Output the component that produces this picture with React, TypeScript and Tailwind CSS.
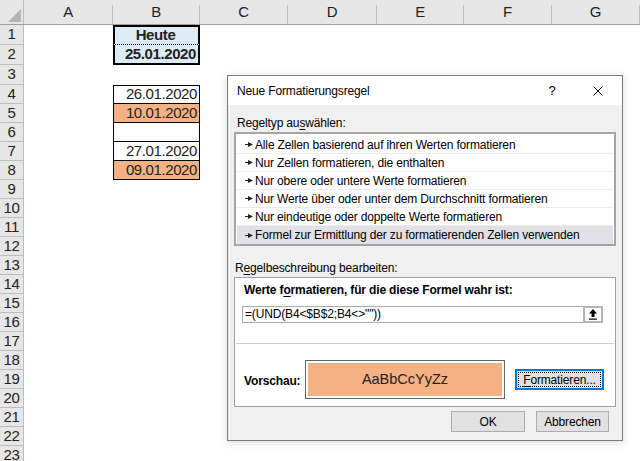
const COLS = [
  { name: "A", w: "w-[89px]" },
  { name: "B", w: "w-[87px]" },
  { name: "C", w: "w-[88px]" },
  { name: "D", w: "w-[89px]" },
  { name: "E", w: "w-[87px]" },
  { name: "F", w: "w-[88px]" },
  { name: "G", w: "w-[88px]" },
];

type Cell = { text?: string; cls: string; textCls?: string };

// Inhalt der Spalte B; alle anderen Zellen sind leer
const B_CELLS: Record<number, Cell> = {
  1: {
    text: "Heute",
    cls: "bg-[#ddebf7] border-l-2 border-r-2 border-t-2 border-b border-black [border-bottom-style:dotted] justify-center",
    textCls: "font-bold",
  },
  2: {
    text: "25.01.2020",
    cls: "bg-[#ddebf7] border-l-2 border-r-2 border-b-2 border-black justify-end",
    textCls: "font-bold",
  },
  4: { text: "26.01.2020", cls: "border border-black justify-end" },
  5: { text: "10.01.2020", cls: "bg-[#f4b183] border-x border-b border-black justify-end" },
  6: { cls: "border-x border-b border-black" },
  7: { text: "27.01.2020", cls: "border-x border-b border-black justify-end" },
  8: { text: "09.01.2020", cls: "bg-[#f4b183] border-x border-b border-black justify-end" },
};

const RULE_TYPES = [
  "Alle Zellen basierend auf ihren Werten formatieren",
  "Nur Zellen formatieren, die enthalten",
  "Nur obere oder untere Werte formatieren",
  "Nur Werte über oder unter dem Durchschnitt formatieren",
  "Nur eindeutige oder doppelte Werte formatieren",
  "Formel zur Ermittlung der zu formatierenden Zellen verwenden",
];

function ListArrow() {
  return (
    <svg width="8" height="5" viewBox="0 0 8 5" className="shrink-0">
      <rect x="0" y="2" width="4" height="1" fill="#222" />
      <path d="M3 0 L8 2.5 L3 5 Z" fill="#222" />
    </svg>
  );
}

function Sheet() {
  const rows = Array.from({ length: 23 }, (_, i) => i + 1);
  return (
    <div className="flex flex-col font-['Liberation_Sans',Arial,sans-serif] text-[15px] tracking-[-0.4px] text-[#222]">
      <div className="flex h-[25px] bg-[#e6e6e6] border-b border-[#a0a0a0]">
        <div className="w-[24px] shrink-0 flex items-end justify-end border-r border-[#bdbdbd] pr-[2px] pb-[2px]">
          <svg width="13" height="13" viewBox="0 0 13 13">
            <path d="M13 0 L13 13 L0 13 Z" fill="#b4b4b4" />
          </svg>
        </div>
        {COLS.map((c) => (
          <div key={c.name} className={`${c.w} shrink-0 flex items-end`}>
            <span className="flex-1 h-full flex items-center justify-center">{c.name}</span>
            <span className="w-px h-[19px] bg-[#bdbdbd]" />
          </div>
        ))}
      </div>
      {rows.map((r) => {
        const b = B_CELLS[r];
        return (
          <div key={r} className={`flex ${r <= 3 ? "h-[20px]" : "h-[19px]"}`}>
            <div className="w-[24px] shrink-0 bg-[#e6e6e6] border-r border-b border-[#bdbdbd] flex items-center justify-center">
              {r}
            </div>
            <div className="w-[89px] shrink-0" />
            <div className={`w-[87px] shrink-0 flex items-center pr-[2px] ${b ? b.cls : ""}`}>
              {b?.text && <span className={b.textCls}>{b.text}</span>}
            </div>
          </div>
        );
      })}
    </div>
  );
}

function Dialog() {
  return (
    <div className="absolute left-[227px] top-[75px] w-[396px] h-[366px] border border-[#7a7a7a] bg-[#f0f0f0] flex flex-col font-['Liberation_Sans',Arial,sans-serif] text-[12px] tracking-[-0.15px] text-black shadow-[0_2px_8px_rgba(0,0,0,0.15)]">
      <div className="h-[29px] bg-white flex items-center pl-[9px]">
        <span className="flex-1">Neue Formatierungsregel</span>
        <span className="w-[10px] text-center text-[13px] mr-[36px]">?</span>
        <svg width="10" height="10" viewBox="0 0 10 10" className="mr-[19px]">
          <path d="M0.5 0.5 L9.5 9.5 M9.5 0.5 L0.5 9.5" stroke="#000" strokeWidth="1" />
        </svg>
      </div>

      <div className="flex flex-col px-[6px] pt-[10px]">
        <div className="h-[16px] leading-[16px] pl-[3px]">
          Regeltyp au<span className="underline underline-offset-2">s</span>wählen:
        </div>
        <div className="mt-[1px] border-2 border-[#a5a5a5] bg-white px-px pt-[2px]">
          {RULE_TYPES.map((t, i) => (
            <div
              key={t}
              className={`h-[18px] flex items-center gap-[2px] pl-[8px] ${
                i === RULE_TYPES.length - 1 ? "bg-[#e0e0e6]" : "border-b border-[#ececec]"
              }`}
            >
              <ListArrow />
              <span>{t}</span>
            </div>
          ))}
        </div>

        <div className="mt-[14px] h-[16px] leading-[16px] pl-px">
          R<span className="underline underline-offset-2">e</span>gelbeschreibung bearbeiten:
        </div>
        <div className="mt-[1px] h-[130px] border border-[#a0a0a0] bg-white flex flex-col">
          <div className="mt-[4px] pl-[9px] h-[16px] leading-[16px] font-bold">
            Werte f<span className="underline underline-offset-2">o</span>rmatieren, für die diese Formel wahr ist:
          </div>
          <div className="mt-[8px] ml-[7px] w-[361px] h-[17px] flex border border-[#a9a9a9]">
            <span className="flex-1 pl-[2px] leading-[15px]">=(UND(B4&lt;$B$2;B4&lt;&gt;""))</span>
            <div className="w-[20px] h-[17px] -mt-px -mr-px border-2 border-[#b4b4b4] bg-white flex items-center justify-center">
              <svg width="8" height="11" viewBox="0 0 8 11">
                <path d="M4 0 L8 4.5 H5.5 V8 H2.5 V4.5 H0 Z" fill="#000" />
                <rect x="0" y="9.5" width="8" height="1.2" fill="#000" />
              </svg>
            </div>
          </div>
          <div className="mt-[20px] mx-px h-px bg-[#cdcdcd]" />
          <div className="mt-[16px] flex items-center pl-[9px]">
            <span className="w-[61px] font-bold pt-[2px]">Vorschau:</span>
            <div className="w-[200px] h-[39px] border border-[#646464] p-[2px] bg-white">
              <div className="h-full bg-[#f4b183] flex items-center justify-center text-[14.5px] tracking-normal text-[#222]">
                AaBbCcYyZz
              </div>
            </div>
            <div className="ml-[10px] w-[89px] h-[21px] border-2 border-[#0078d7] bg-[#e1e1e1] p-px">
              <div className="h-full border border-dotted border-black flex items-center justify-center">
                <span>
                  <span className="underline underline-offset-2">F</span>ormatieren...
                </span>
              </div>
            </div>
          </div>
        </div>

        <div className="mt-[4px] flex justify-end gap-[11px] pr-[7px]">
          <div className="w-[74px] h-[21px] border border-[#adadad] bg-[#e1e1e1] flex items-center justify-center">
            OK
          </div>
          <div className="w-[73px] h-[21px] border border-[#adadad] bg-[#e1e1e1] flex items-center justify-center">
            Abbrechen
          </div>
        </div>
      </div>
    </div>
  );
}

export default function App() {
  return (
    <div className="relative w-[640px] h-[461px] overflow-hidden bg-white">
      <Sheet />
      <Dialog />
    </div>
  );
}
